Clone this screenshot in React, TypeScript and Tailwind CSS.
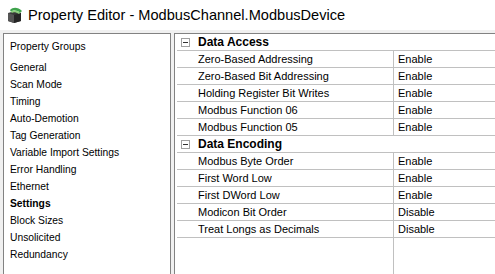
import React from 'react';

const groups = [
  'General',
  'Scan Mode',
  'Timing',
  'Auto-Demotion',
  'Tag Generation',
  'Variable Import Settings',
  'Error Handling',
  'Ethernet',
  'Settings',
  'Block Sizes',
  'Unsolicited',
  'Redundancy',
];

type Row = { kind: 'cat'; label: string } | { kind: 'prop'; name: string; value: string };

const rows: Row[] = [
  { kind: 'cat', label: 'Data Access' },
  { kind: 'prop', name: 'Zero-Based Addressing', value: 'Enable' },
  { kind: 'prop', name: 'Zero-Based Bit Addressing', value: 'Enable' },
  { kind: 'prop', name: 'Holding Register Bit Writes', value: 'Enable' },
  { kind: 'prop', name: 'Modbus Function 06', value: 'Enable' },
  { kind: 'prop', name: 'Modbus Function 05', value: 'Enable' },
  { kind: 'cat', label: 'Data Encoding' },
  { kind: 'prop', name: 'Modbus Byte Order', value: 'Enable' },
  { kind: 'prop', name: 'First Word Low', value: 'Enable' },
  { kind: 'prop', name: 'First DWord Low', value: 'Enable' },
  { kind: 'prop', name: 'Modicon Bit Order', value: 'Disable' },
  { kind: 'prop', name: 'Treat Longs as Decimals', value: 'Disable' },
];

function DeviceIcon() {
  return (
    <svg width="16" height="16" viewBox="0 0 16 16">
      <path d="M1 6 L8 4 L14 6 L14 14 L7 16 L1 14 Z" fill="#3a3a3a" />
      <path d="M1 6 L7 8 L7 16 L1 14 Z" fill="#555" />
      <path d="M7 8 L14 6 L14 14 L7 16 Z" fill="#262626" />
      <path d="M3 3 C6 0 11 0 15 4 L13 6 C10 3 6 3 4 5 Z" fill="#3fa34d" />
      <path d="M4 5 C6 3 10 3 13 6 L12 7 C9 5 6 5 5 6 Z" fill="#8bd17c" />
    </svg>
  );
}

function MinusBox() {
  return (
    <div className="w-[9px] h-[9px] border border-[#a0a0a0] bg-white flex items-center justify-center">
      <div className="w-[5px] h-px bg-[#333]" />
    </div>
  );
}

export default function App() {
  return (
    <div
      className="w-[495px] h-[274px] overflow-hidden bg-[#f0f0f0] text-black"
      style={{ fontFamily: '"Liberation Sans", Arial, sans-serif' }}
    >
      <div className="h-[30px] bg-white flex items-center pl-[7px] gap-[5px]">
        <DeviceIcon />
        <span className="text-[14.6px] leading-none">Property Editor - ModbusChannel.ModbusDevice</span>
      </div>

      <div className="flex h-[244px] pt-[3px] pl-[3px] gap-[3px]">
        <div className="w-[168px] h-[260px] bg-white border border-b-0 border-[#828282] pt-[4px] pl-[6px] text-[10.3px]">
          <div className="h-[17px] leading-[17px] mb-[4px]">Property Groups</div>
          {groups.map((g) => (
            <div
              key={g}
              className={`h-[17px] leading-[17px] ${g === 'Settings' ? 'font-bold' : ''}`}
            >
              {g}
            </div>
          ))}
        </div>

        <div className="flex-1 h-[260px] bg-white border border-r-0 border-b-0 border-[#828282] pl-[2px] flex flex-col">
          {rows.map((r, i) =>
            r.kind === 'cat' ? (
              <div key={i} className="h-[17px] flex items-center border-b border-[#c0c0c0] pl-[4px]">
                <MinusBox />
                <span className="ml-[8px] text-[12px] font-bold leading-none">{r.label}</span>
              </div>
            ) : (
              <div key={i} className="h-[17px] flex border-b border-[#c0c0c0] text-[11px]">
                <div className="w-[217px] border-r border-[#c0c0c0] pl-[21px] leading-[16px]">{r.name}</div>
                <div className="pl-[4px] leading-[16px]">{r.value}</div>
              </div>
            )
          )}
          <div className="flex-1 flex">
            <div className="w-[217px] border-r border-[#c0c0c0]" />
          </div>
        </div>
      </div>
    </div>
  );
}
